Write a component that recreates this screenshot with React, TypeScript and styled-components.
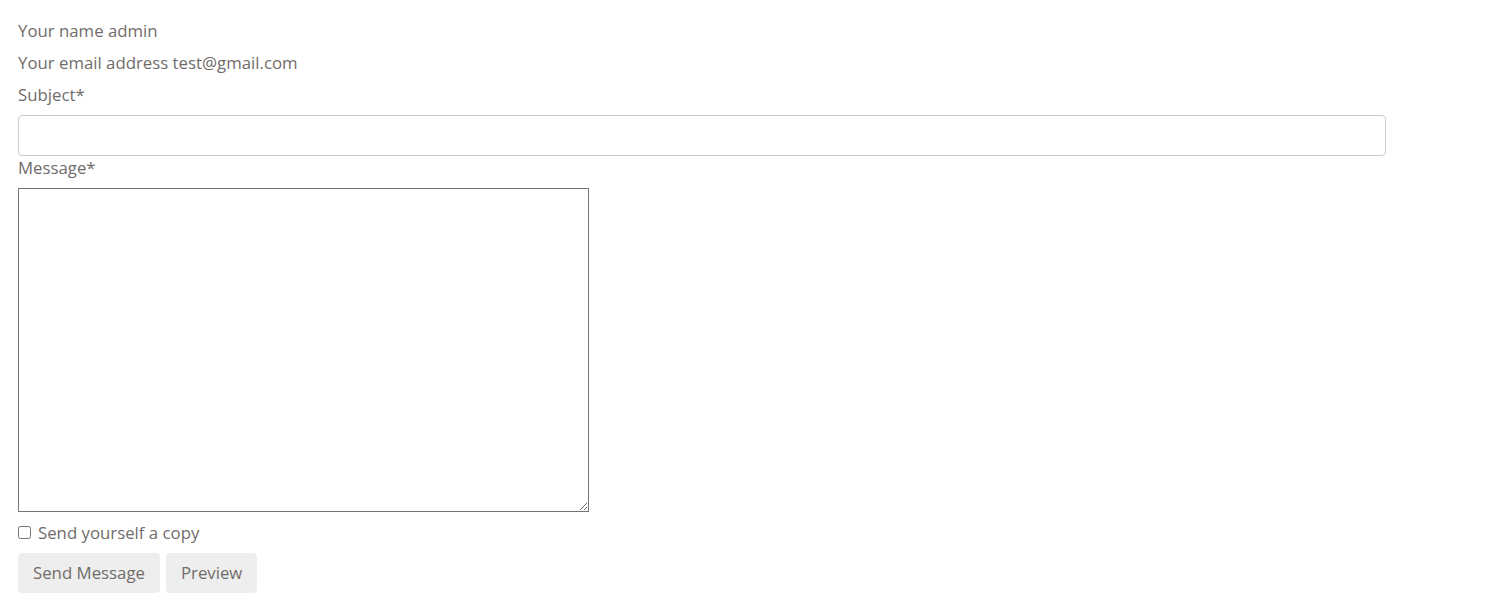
import styled, { createGlobalStyle } from 'styled-components'

const GlobalStyle = createGlobalStyle`
  body {
    margin: 0;
    background: #fff;
    font-family: "Open Sans", "Liberation Sans", sans-serif;
    color: #716c6a;
  }
`

const Form = styled.form`
  display: flex;
  flex-direction: column;
  padding: 19px 18px;
  font-size: 16.8px;
  line-height: 24px;
`

const InfoRow = styled.div`
  margin-bottom: 8px;
`

const Label = styled.label`
  display: block;
  margin-bottom: 8px;
`

const TextInput = styled.input`
  box-sizing: border-box;
  width: 1368px;
  height: 41px;
  border: 1px solid #cccccc;
  border-radius: 4px;
  padding: 6px 12px;
  font: inherit;
  color: inherit;
  outline: none;
`

const TextArea = styled.textarea`
  box-sizing: border-box;
  width: 571px;
  height: 324px;
  border: 1px solid #767676;
  border-radius: 0;
  margin: 0 0 9px;
  padding: 2px;
  font: inherit;
  display: block;
  resize: both;
`

const CheckRow = styled.label`
  display: flex;
  align-items: center;
  gap: 7px;
  margin-bottom: 8px;
`

const CheckBox = styled.input`
  width: 13px;
  height: 13px;
  margin: 0;
  position: relative;
  top: -1px;
`

const Actions = styled.div`
  display: flex;
  gap: 6px;
`

const Button = styled.button`
  height: 40px;
  padding: 0 15px;
  border: none;
  border-radius: 4px;
  background: #eeeeee;
  color: #716c6a;
  font: inherit;
  cursor: pointer;
`

const App = () => {
  return (
    <>
      <GlobalStyle />
      <Form onSubmit={(e) => e.preventDefault()}>
        <InfoRow>Your name admin</InfoRow>
        <InfoRow>Your email address test@gmail.com</InfoRow>
        <Label htmlFor="subject">Subject*</Label>
        <TextInput id="subject" type="text" />
        <Label htmlFor="message">Message*</Label>
        <TextArea id="message" />
        <CheckRow>
          <CheckBox type="checkbox" />
          Send yourself a copy
        </CheckRow>
        <Actions>
          <Button type="submit">Send Message</Button>
          <Button type="button">Preview</Button>
        </Actions>
      </Form>
    </>
  )
}

export default App
